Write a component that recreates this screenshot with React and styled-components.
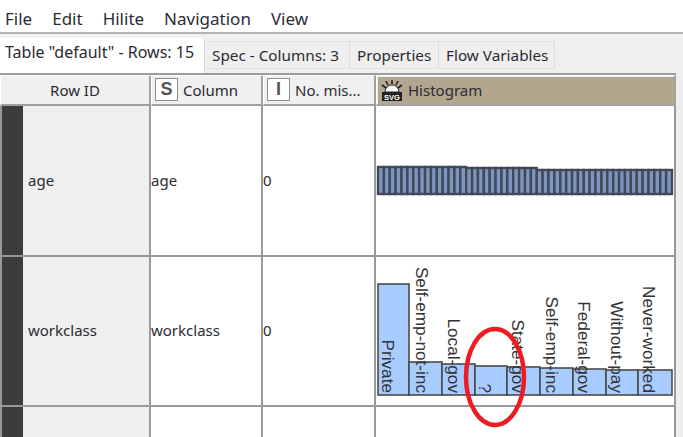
import React from "react";
import styled, { createGlobalStyle } from "styled-components";

const GlobalStyle = createGlobalStyle`
  html, body {
    margin: 0;
    padding: 0;
    background: #fff;
    overflow: hidden;
  }
`;

const Page = styled.div`
  position: relative;
  width: 683px;
  height: 437px;
  overflow: hidden;
  background: #fff;
  color: #2b2b33;
  font-family: "Noto Sans", "Open Sans", sans-serif;
  font-size: 15px;
`;

const MenuBar = styled.div`
  display: flex;
  gap: 20px;
  height: 34px;
  padding: 8px 0 0 5px;
  box-sizing: border-box;
  font-size: 17px;
  line-height: 22px;
  border-bottom: 2px solid #b4b4b4;
`;

const TabStrip = styled.div`
  display: flex;
  align-items: flex-start;
  height: 39px;
  box-sizing: border-box;
  padding-top: 4px;
  background: #f0f0f0;
`;

const Tab = styled.div`
  box-sizing: border-box;
  width: ${(p) => p.$width}px;
  height: ${(p) => (p.$active ? 35 : 28)}px;
  margin-top: ${(p) => (p.$active ? 0 : 3)}px;
  padding: ${(p) => (p.$active ? "4px 0 0 5px" : "3px 0 0 7px")};
  font-size: ${(p) => (p.$active ? 16 : 15.3)}px;
  line-height: 20px;
  white-space: nowrap;
  background: ${(p) => (p.$active ? "#fff" : "#efefef")};
  border-right: 1px solid #dcdcdc;
  border-top: ${(p) => (p.$active ? "none" : "1px solid #e2e2e2")};
  border-bottom: ${(p) => (p.$active ? "none" : "1px solid #e2e2e2")};
`;

const TableArea = styled.div`
  display: flex;
  background: #eeeeee;
`;

const Table = styled.div`
  display: grid;
  grid-template-columns: 151px 112px 113px 300px;
  grid-template-rows: 31px 151px 150px 40px;
  width: 676px;
  flex: none;
  background: #fff;
  border-top: 2px solid #9c9c9c;
  box-sizing: border-box;
`;

const HeaderCell = styled.div`
  display: flex;
  align-items: center;
  justify-content: ${(p) => (p.$center ? "center" : "flex-start")};
  gap: 5px;
  box-sizing: border-box;
  padding: 0 ${(p) => (p.$center ? "0" : "3px")} 1px;
  background: #f0f0f0;
  border: 1px solid #fff;
  border-right: 2px solid #a0a0a0;
  border-bottom: 2px solid #a0a0a0;
  white-space: nowrap;
`;

const TypeBadge = styled.span`
  display: inline-flex;
  align-items: center;
  justify-content: center;
  width: 23px;
  height: 23px;
  box-sizing: border-box;
  background: #fff;
  border: 1px solid #8c8c8c;
  color: #555;
  font-family: "Liberation Sans", sans-serif;
  font-size: 18px;
  font-weight: 700;
`;

const HistogramHeader = styled(HeaderCell)`
  padding: 1px 0 0 1px;
  align-items: stretch;
`;

const HistogramTitle = styled.div`
  flex: 1;
  display: flex;
  align-items: center;
  gap: 5px;
  padding: 0 0 1px 3px;
  background: #b2a68f;
`;

const RowHead = styled.div`
  display: flex;
  align-items: center;
  box-sizing: border-box;
  padding-bottom: 2px;
  background: #efefef;
  border-left: 2px solid #999;
  border-right: 2px solid #999;
  border-bottom: 2px solid #999;
`;

const RowMarker = styled.span`
  align-self: stretch;
  width: 21px;
  margin: 0 5px -2px 0;
  flex: none;
  background: #3c3c3c;
`;

const Cell = styled.div`
  display: flex;
  align-items: center;
  box-sizing: border-box;
  padding-bottom: 2px;
  border-right: 2px solid #999;
  border-bottom: 2px solid #999;
`;

const ChartCell = styled(Cell)`
  padding: 0;
  svg {
    display: block;
  }
`;

const ChartLabel = styled.text`
  font-family: "Liberation Sans", Arial, sans-serif;
  font-size: 17.2px;
  fill: #333;
`;

const Scrollbar = styled.div`
  flex: 1;
  height: 364px;
`;

const Annotation = styled.svg`
  position: absolute;
  left: 458px;
  top: 322px;
`;

const IconLabel = styled.text`
  font-family: "Liberation Sans", Arial, sans-serif;
  font-size: 7.5px;
  font-weight: 700;
  fill: #fff;
`;

const ageSteps = [
  { from: 378, to: 462, top: 167 },
  { from: 462, to: 535, top: 168 },
  { from: 535, to: 672, top: 170 },
];

const ageBars = Array.from({ length: 50 }, (_, i) => {
  const x = 378 + i * 5.88;
  const step = ageSteps.find((s) => x < s.to) || ageSteps[2];
  return { x, top: step.top };
});

const workclass = [
  { label: "Private", x: 378, w: 31, top: 284, base: 382 },
  { label: "Self-emp-not-inc", x: 409, w: 33, top: 362, base: 416 },
  { label: "Local-gov", x: 442, w: 33, top: 364, base: 448 },
  { label: "?", x: 475, w: 32, top: 366, base: 479 },
  { label: "State-gov", x: 507, w: 33, top: 367, base: 512 },
  { label: "Self-emp-inc", x: 540, w: 33, top: 368, base: 546 },
  { label: "Federal-gov", x: 573, w: 33, top: 369, base: 578 },
  { label: "Without-pay", x: 606, w: 32, top: 370, base: 611 },
  { label: "Never-worked", x: 638, w: 34, top: 370, base: 643 },
];

const AgeChart = () => (
  <svg width="298" height="149" viewBox="376 106 298 149">
    {ageBars.map((b) => (
      <rect
        key={b.x}
        x={b.x}
        y={b.top}
        width="5.88"
        height={194 - b.top}
        fill="#7b96c2"
        stroke="#434954"
        strokeWidth="2.4"
      />
    ))}
  </svg>
);

const WorkclassChart = () => (
  <svg width="298" height="148" viewBox="376 257 298 148">
    {workclass.map((b) => (
      <g key={b.label}>
        <rect
          x={b.x}
          y={b.top}
          width={b.w}
          height={395 - b.top}
          fill="#a8ccff"
          stroke="#4a4a4a"
          strokeWidth="1.6"
        />
        <ChartLabel textAnchor="end" transform={`translate(${b.base} 393) rotate(90)`}>
          {b.label}
        </ChartLabel>
      </g>
    ))}
  </svg>
);

const RendererIcon = () => (
  <svg width="22" height="22" viewBox="0 0 22 22">
    <path
      d="M11 1v4M5 2l2 4M17 2l-2 4M1 6l4 3M21 6l-4 3"
      stroke="#222"
      strokeWidth="1.6"
      fill="none"
    />
    <path d="M4 13a7 7 0 0 1 14 0z" fill="#fff" stroke="#222" />
    <rect x="1" y="13" width="20" height="9" fill="#222" />
    <IconLabel x="11" y="20.5" textAnchor="middle">SVG</IconLabel>
  </svg>
);

const App = () => (
  <Page>
    <GlobalStyle />
    <MenuBar>
      <span>File</span>
      <span>Edit</span>
      <span>Hilite</span>
      <span>Navigation</span>
      <span>View</span>
    </MenuBar>
    <TabStrip>
      <Tab $active $width={205}>Table "default" - Rows: 15</Tab>
      <Tab $width={145}>Spec - Columns: 3</Tab>
      <Tab $width={89}>Properties</Tab>
      <Tab $width={116}>Flow Variables</Tab>
    </TabStrip>
    <TableArea>
      <Table>
        <HeaderCell $center>Row ID</HeaderCell>
        <HeaderCell><TypeBadge>S</TypeBadge>Column</HeaderCell>
        <HeaderCell><TypeBadge>I</TypeBadge>No. mis...</HeaderCell>
        <HistogramHeader>
          <HistogramTitle><RendererIcon />Histogram</HistogramTitle>
        </HistogramHeader>

        <RowHead><RowMarker />age</RowHead>
        <Cell>age</Cell>
        <Cell>0</Cell>
        <ChartCell><AgeChart /></ChartCell>

        <RowHead><RowMarker />workclass</RowHead>
        <Cell>workclass</Cell>
        <Cell>0</Cell>
        <ChartCell><WorkclassChart /></ChartCell>

        <RowHead><RowMarker /></RowHead>
        <Cell />
        <Cell />
        <Cell />
      </Table>
      <Scrollbar />
    </TableArea>
    <Annotation width="70" height="112" viewBox="0 0 70 112">
      <ellipse cx="37" cy="55" rx="29" ry="48" fill="none" stroke="#ed1c24" strokeWidth="4.5" />
    </Annotation>
  </Page>
);

export default App;
